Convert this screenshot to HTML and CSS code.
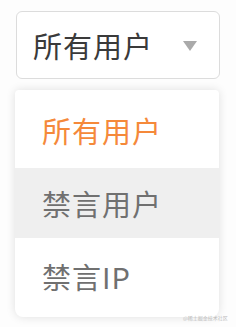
FILE: index.html
```html
<!DOCTYPE html>
<html lang="zh">
<head>
<meta charset="utf-8">
<link rel="stylesheet" href="styles.css">
</head>
<body>
<div class="page">
  <div class="select">
    <span class="select-value">所有用户</span>
    <span class="arrow"></span>
  </div>
  <ul class="menu">
    <li class="item item-active">所有用户</li>
    <li class="item item-hover">禁言用户</li>
    <li class="item">禁言IP</li>
  </ul>
  <div class="watermark">@稀土掘金技术社区</div>
</div>
</body>
</html>
```
FILE: styles.css
```css
html, body {
  margin: 0;
  padding: 0;
  background: #fdfdfd;
}
.page {
  position: relative;
  width: 236px;
  height: 327px;
  overflow: hidden;
  font-family: "Noto Sans CJK SC", "Noto Sans", sans-serif;
  padding-top: 11px;
  box-sizing: border-box;
}
.select {
  margin-left: 16px;
  width: 204px;
  height: 68px;
  box-sizing: border-box;
  border: 1px solid #dcdcdc;
  border-radius: 6px;
  background: #fff;
  display: flex;
  align-items: center;
  padding-left: 16px;
  padding-right: 22px;
  justify-content: space-between;
}
.select-value {
  font-size: 29px;
  color: #3a3a3a;
  line-height: 1;
  letter-spacing: 1px;
}
.arrow {
  width: 0;
  height: 0;
  border-left: 7px solid transparent;
  border-right: 7px solid transparent;
  border-top: 10px solid #aaa;
  margin-top: 2px;
}
.menu {
  list-style: none;
  margin: 11px 0 0 15px;
  padding: 0;
  width: 204px;
  background: #fff;
  border-radius: 4px 4px 8px 8px;
  box-shadow: 0 0 10px rgba(0, 0, 0, 0.12);
  overflow: hidden;
}
.item {
  height: 74px;
  display: flex;
  align-items: center;
  padding-left: 27px;
  font-size: 29px;
  color: #707070;
  letter-spacing: 1px;
}
.item-active {
  height: 78px;
  color: #f5893a;
  padding-top: 2px;
  box-sizing: border-box;
}
.item-hover {
  height: 70px;
  background: #efefef;
}
.item:last-child {
  height: 79px;
  padding-bottom: 4px;
  box-sizing: border-box;
}
.watermark {
  position: absolute;
  left: 183px;
  top: 314px;
  font-size: 5px;
  color: #bbb;
  white-space: nowrap;
}
```
